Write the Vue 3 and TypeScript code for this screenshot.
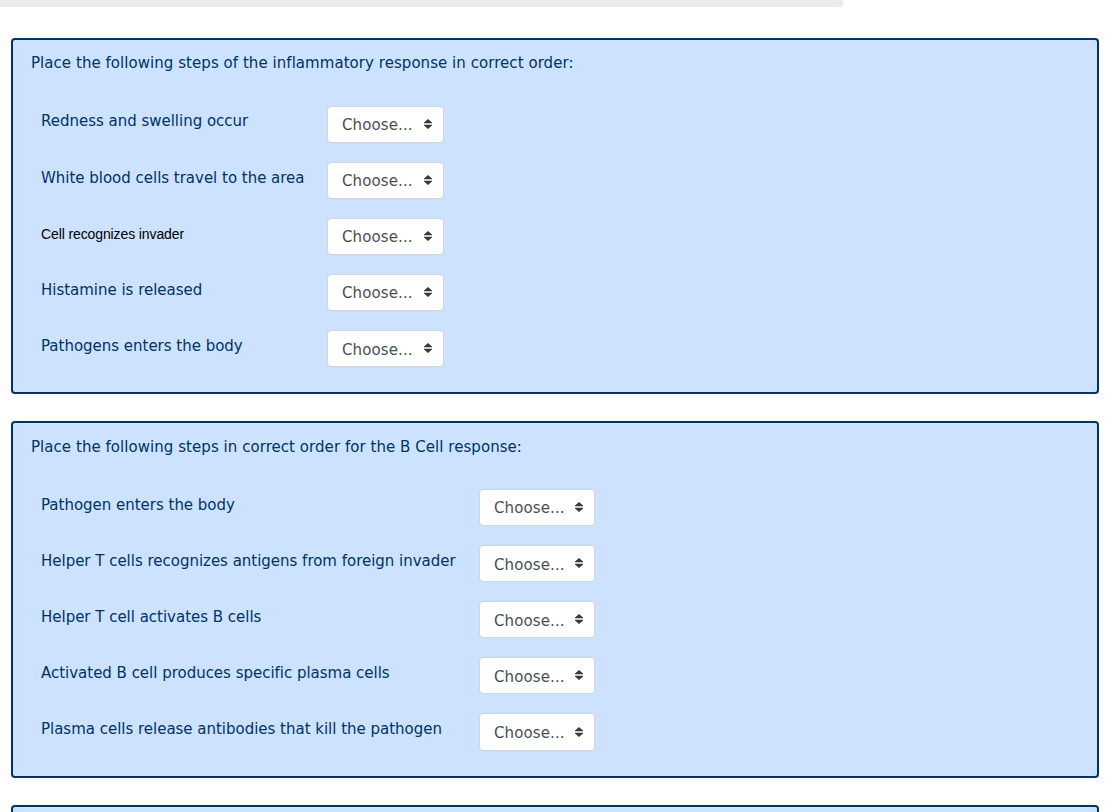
<script setup lang="ts">
interface Step {
  text: string
  plain?: boolean
}

interface Question {
  id: string
  prompt: string
  steps: Step[]
}

const questions: Question[] = [
  {
    id: 'inflammatory',
    prompt: 'Place the following steps of the inflammatory response in correct order:',
    steps: [
      { text: 'Redness and swelling occur' },
      { text: 'White blood cells travel to the area' },
      { text: 'Cell recognizes invader', plain: true },
      { text: 'Histamine is released' },
      { text: 'Pathogens enters the body' },
    ],
  },
  {
    id: 'bcell',
    prompt: 'Place the following steps in correct order for the B Cell response:',
    steps: [
      { text: 'Pathogen enters the body' },
      { text: 'Helper T cells recognizes antigens from foreign invader' },
      { text: 'Helper T cell activates B cells' },
      { text: 'Activated B cell produces specific plasma cells' },
      { text: 'Plasma cells release antibodies that kill the pathogen' },
    ],
  },
]
</script>

<template>
  <main class="page">
    <div class="bar"></div>
    <section v-for="q in questions" :key="q.id" class="panel" :class="q.id">
      <p class="prompt">{{ q.prompt }}</p>
      <div v-for="step in q.steps" :key="step.text" class="row">
        <div class="label" :class="{ plain: step.plain }">{{ step.text }}</div>
        <div class="choice" role="combobox" tabindex="0">
          <span>Choose...</span>
          <svg class="arrows" viewBox="0 0 8 10" width="8" height="10">
            <path d="M4 0L8 3.6V4.2H0V3.6zM0 5.8H8V6.4L4 10L0 6.4z" fill="#343a40" />
          </svg>
        </div>
      </div>
    </section>
    <section class="panel"></section>
  </main>
</template>

<style>
html,
body {
  margin: 0;
  overflow: hidden;
  background: #fff;
}
</style>

<style scoped>
.page {
  box-sizing: border-box;
  height: 812px;
  overflow: hidden;
  font-family: Verdana, "DejaVu Sans", sans-serif;
  font-size: 15px;
  color: #003366;
}
.bar {
  width: 843px;
  height: 7px;
  margin-bottom: 31px;
  background: #e9ecef;
  border-radius: 0 0 3px 0;
}
.panel {
  box-sizing: border-box;
  width: 1088px;
  height: 357px;
  margin: 0 0 27px 11px;
  border: 2px solid #003366;
  border-radius: 4px;
  background: #cce2ff;
  padding: 13px 18px 0;
}
.inflammatory {
  height: 356px;
  padding-top: 12px;
}
.prompt {
  margin: 0 0 31px;
  line-height: 22px;
  white-space: nowrap;
  letter-spacing: 0.05px;
}
.inflammatory .prompt {
  margin-bottom: 32px;
}
.row {
  display: flex;
  height: 56px;
  padding-left: 10px;
  box-sizing: border-box;
}
.label {
  width: 286px;
  line-height: 22px;
  padding-top: 5px;
  white-space: nowrap;
  letter-spacing: -0.015px;
}
.inflammatory .prompt + .row .label {
  padding-top: 4px;
}
.bcell .label {
  width: 438px;
}
.label.plain {
  font-family: "Liberation Sans", Arial, sans-serif;
  font-size: 14px;
  letter-spacing: -0.11px;
  color: #000;
}
.choice {
  box-sizing: border-box;
  width: 117px;
  height: 37px;
  display: flex;
  align-items: center;
  justify-content: space-between;
  padding: 0 11px 0 14px;
  border: 1px solid #ced4da;
  border-radius: 4px;
  background: #fff;
  color: #495057;
  letter-spacing: 0.12px;
}
.bcell .choice {
  width: 116px;
}
.inflammatory .row:last-child .choice span,
.bcell .row + .row .choice span {
  padding-top: 2px;
}
.bcell .row:last-child .choice {
  height: 38px;
}
.arrows {
  display: block;
  margin-bottom: 1px;
}
</style>
